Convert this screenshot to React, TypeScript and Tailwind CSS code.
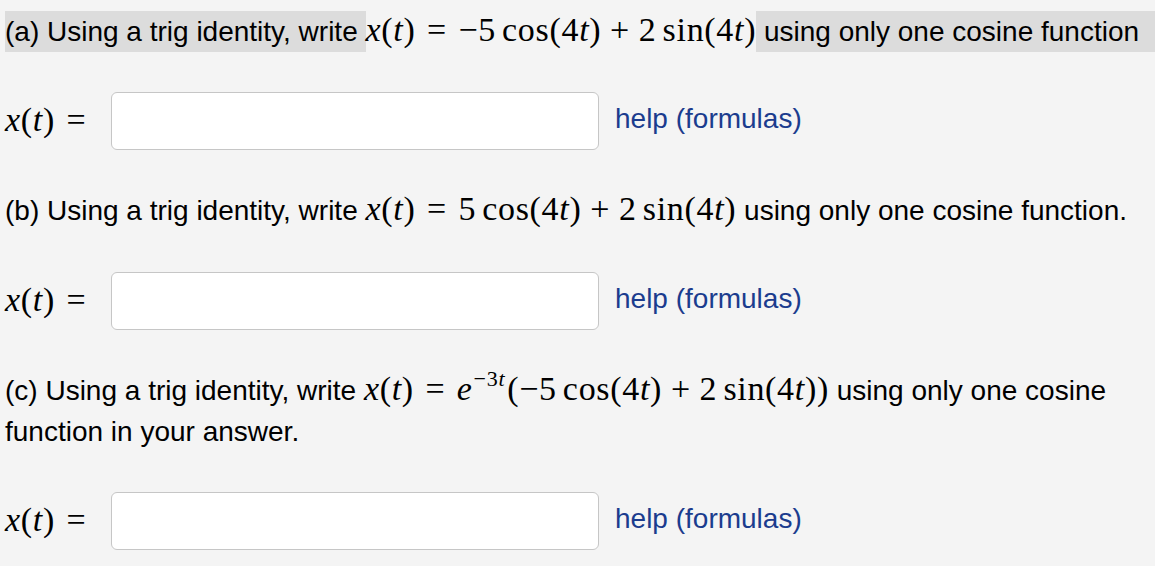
import React from 'react';

// small helpers for the typeset formulas
const V = ({ children }: { children: React.ReactNode }) => <span className="italic">{children}</span>;
const Rel = ({ children }: { children: React.ReactNode }) => <span className="mx-[0.34em]">{children}</span>;
const Bin = ({ children }: { children: React.ReactNode }) => <span className="mx-[0.26em]">{children}</span>;

const Math = ({ children }: { children: React.ReactNode }) => (
    <span className="font-['Liberation_Serif',serif] text-[34px] tracking-[0.02em] whitespace-nowrap leading-none">
        {children}
    </span>
);

const Xt = () => (
    <>
        <V>x</V>(<V>t</V>)
    </>
);

const Trig = ({ lead }: { lead: string }) => (
    <>
        {lead}
        <span className="ml-[0.18em]">cos</span>(4<V>t</V>)<Bin>+</Bin>2<span className="ml-[0.18em]">sin</span>(4<V>t</V>)
    </>
);

const AnswerRow = () => (
    <div className="flex items-center h-[58px]">
        <div className="w-[106px] shrink-0">
            <Math>
                <Xt />
                <Rel>=</Rel>
            </Math>
        </div>
        <input
            type="text"
            className="w-[488px] h-[58px] bg-white border-[1.5px] border-[#c6c6c6] rounded-[6px] outline-none px-3"
        />
        <a href="#" className="ml-[16px] pb-[5px] text-[#1b3c8e] text-[28px]">
            help (formulas)
        </a>
    </div>
);

const App = () => {
    return (
        <div className="w-[1155px] h-[566px] overflow-hidden bg-[#f4f4f4] pl-[5px] pt-[11px] text-black font-['Liberation_Sans',Arial,sans-serif] text-[28px] leading-[41px]">
            <p className="whitespace-nowrap">
                <span className="bg-[#dcdcdc] py-[5px]">(a) Using a trig identity, write </span>
                <Math>
                    <Xt />
                    <Rel>=</Rel>
                    <Trig lead="−5" />
                </Math>
                <span className="bg-[#dcdcdc] py-[5px] pr-[30px]"> using only one cosine function</span>
            </p>
            <div className="mt-[40px]">
                <AnswerRow />
            </div>

            <p className="mt-[40px]">
                (b) Using a trig identity, write{' '}
                <Math>
                    <Xt />
                    <Rel>=</Rel>
                    <Trig lead="5" />
                </Math>{' '}
                using only one cosine function.
            </p>
            <div className="mt-[41px]">
                <AnswerRow />
            </div>

            <p className="mt-[40px] pr-[20px]">
                (c) Using a trig identity, write{' '}
                <Math>
                    <Xt />
                    <Rel>=</Rel>
                    <V>e</V>
                    <sup className="text-[22px] ml-[1px] mr-[2px] relative -top-[14px]">
                        −3<V>t</V>
                    </sup>
                    (<Trig lead="−5" />)
                </Math>{' '}
                using only one cosine function in your answer.
            </p>
            <div className="mt-[40px]">
                <AnswerRow />
            </div>
        </div>
    );
};

export default App;
